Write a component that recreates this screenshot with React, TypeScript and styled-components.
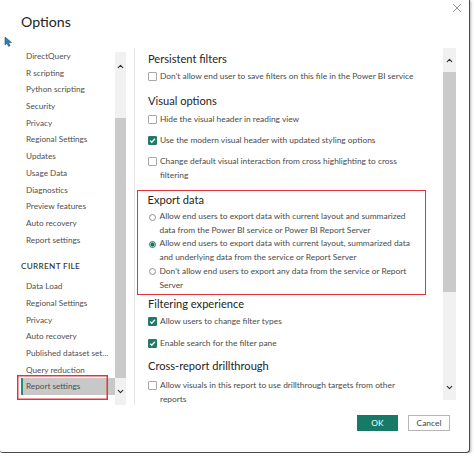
import React from 'react';
import styled, { createGlobalStyle } from 'styled-components';
import { ChevronUp, ChevronDown } from 'lucide-react';

const GlobalStyle = createGlobalStyle`
  html, body { margin: 0; padding: 0; background: #fff; }
  body { font-family: 'Segoe UI', Lato, 'Open Sans', sans-serif; }
`;

const Window = styled.div`
  position: relative;
  box-sizing: border-box;
  width: 470px;
  height: 453px;
  background: #fff;
  border-right: 1.5px solid #4a4a4a;
  border-bottom: 1.5px solid #4a4a4a;
  border-bottom-right-radius: 4px;
  border-bottom-left-radius: 3px;
  box-shadow: 1px 1px 3px rgba(0, 0, 0, 0.3);
  display: flex;
  flex-direction: column;
`;

const TitleBar = styled.div`
  height: 48px;
  display: flex;
  justify-content: space-between;
  align-items: flex-start;
`;

const Title = styled.h1`
  margin: 12px 0 0 21px;
  font-size: 14.2px;
  line-height: 20px;
  font-weight: 400;
  color: #252423;
`;

const Close = styled.span`
  margin: 3px 7px 0 0;
  display: flex;
`;

const Cursor = styled.svg`
  position: absolute;
  left: 4px;
  top: 36px;
`;

const Body = styled.div`
  display: flex;
  height: 357px;
`;

const Nav = styled.nav`
  width: 115px;
  display: flex;
  flex-direction: column;
  font-size: 8.2px;
  color: #505050;
`;

const NavItem = styled.div<{ $active?: boolean }>`
  position: relative;
  height: 16.7px;
  line-height: 16.7px;
  margin-left: 21px;
  padding-left: 3px;
  white-space: nowrap;
  background: ${p => (p.$active ? '#c8c8c8' : 'transparent')};
  border-left: 2px solid ${p => (p.$active ? '#2b8a7a' : 'transparent')};

  ${p =>
    p.$active &&
    `
    &::after {
      content: '';
      position: absolute;
      left: -6px;
      right: 7px;
      top: -3.5px;
      bottom: -4.5px;
      box-shadow: 0 0 0 1.5px rgb(227, 52, 61) inset;
    }
  `}
`;

const NavHeader = styled.div`
  height: 16.7px;
  line-height: 16.7px;
  margin: 10px 0 3.3px 21px;
  font-weight: 600;
  letter-spacing: 0.3px;
  color: #3a3a3a;
`;

const Track = styled.div<{ $w: number; $top: number; $h: number }>`
  flex: none;
  width: ${p => p.$w}px;
  height: ${p => p.$h}px;
  margin-top: ${p => p.$top}px;
  background: #f1f1f1;
  display: flex;
  flex-direction: column;
  align-items: center;
  color: #333;
`;

const Arrow = styled.div<{ $h: number }>`
  height: ${p => p.$h}px;
  display: flex;
  align-items: center;
  justify-content: center;
`;

const Thumb = styled.div<{ $gap: number; $h: number }>`
  align-self: stretch;
  margin-top: ${p => p.$gap}px;
  height: ${p => p.$h}px;
  background: #cacaca;
`;

const Spacer = styled.div`
  flex: 1;
`;

const Divider = styled.div`
  width: 1px;
  margin-left: 8px;
  background: #e6e6e6;
`;

const Content = styled.div`
  width: 308px;
  box-sizing: border-box;
  padding: 2px 0 0 13px;
  display: flex;
  flex-direction: column;
`;

const Heading = styled.h2<{ $gap?: number }>`
  margin: ${p => p.$gap ?? 0}px 0 1px 0;
  height: 18px;
  line-height: 18px;
  font-size: 11.1px;
  font-weight: 400;
  color: #252423;
  white-space: nowrap;
`;

const Row = styled.label<{ $gap?: number }>`
  display: flex;
  align-items: flex-start;
  gap: 3px;
  margin-top: ${p => p.$gap ?? 0}px;
  font-size: 8.4px;
  line-height: 14px;
  color: #4a4a4a;
  white-space: nowrap;
`;

const Box = styled.span<{ $checked?: boolean }>`
  flex: none;
  box-sizing: border-box;
  width: 9px;
  height: 9px;
  margin-top: 2.5px;
  border: 1px solid ${p => (p.$checked ? '#1f7a67' : '#a8a8a8')};
  background: ${p => (p.$checked ? '#1f7a67' : '#fff')};
  border-radius: 1px;
  display: flex;
  align-items: center;
  justify-content: center;
`;

const Radio = styled.span<{ $checked?: boolean }>`
  flex: none;
  box-sizing: border-box;
  width: 7px;
  height: 7px;
  margin: 3.5px 1px 0 1px;
  border-radius: 50%;
  border: 1px solid ${p => (p.$checked ? '#1f7a67' : '#8f8f8f')};
  background: ${p => (p.$checked ? 'radial-gradient(circle, #1f6f5f 0 1.8px, #cfe6df 2.2px)' : '#fff')};
`;

const ExportBox = styled.section`
  box-sizing: border-box;
  width: 289px;
  margin: 8px 0 0 -11px;
  padding: 0 0 2px 9.5px;
  border: 1.5px solid #e3343d;

  label {
    line-height: 13.7px;
  }
`;

const Footer = styled.div`
  display: flex;
  justify-content: flex-end;
  gap: 10px;
  padding: 10px 19px 0 0;
`;

const Button = styled.button<{ $primary?: boolean }>`
  box-sizing: border-box;
  width: ${p => (p.$primary ? 41 : 42)}px;
  height: 16px;
  padding: 0;
  font-family: inherit;
  font-size: 8.4px;
  border: 1px solid ${p => (p.$primary ? '#167a66' : '#b5b5b5')};
  background: ${p => (p.$primary ? '#167a66' : '#fff')};
  color: ${p => (p.$primary ? '#fff' : '#444')};
`;

const Check = () => (
  <svg width="7" height="7" viewBox="0 0 8 8">
    <path d="M1.3 4.2 3.2 6 6.8 2" fill="none" stroke="#fff" strokeWidth="1.4" />
  </svg>
);

const CheckRow = ({ checked, gap, children }: { checked?: boolean; gap?: number; children: React.ReactNode }) => (
  <Row $gap={gap}>
    <Box $checked={checked}>{checked && <Check />}</Box>
    <span>{children}</span>
  </Row>
);

const RadioRow = ({ checked, children }: { checked?: boolean; children: React.ReactNode }) => (
  <Row>
    <Radio $checked={checked} />
    <span>{children}</span>
  </Row>
);

const globalItems = [
  'DirectQuery', 'R scripting', 'Python scripting', 'Security', 'Privacy', 'Regional Settings',
  'Updates', 'Usage Data', 'Diagnostics', 'Preview features', 'Auto recovery', 'Report settings',
];

const fileItems = [
  'Data Load', 'Regional Settings', 'Privacy', 'Auto recovery', 'Published dataset set...', 'Query reduction',
];

export default function App() {
  return (
    <>
      <GlobalStyle />
      <Window>
        <TitleBar>
          <Title>Options</Title>
          <Close>
            <svg width="10" height="10" viewBox="0 0 10 10">
              <path d="M1 1 9 9M9 1 1 9" stroke="#8a8a8a" strokeWidth="0.9" />
            </svg>
          </Close>
        </TitleBar>
        <Cursor width="9" height="11" viewBox="0 0 9 11">
          <path d="M1 1 1 9 3 7.2 4.6 10.4 6 9.8 4.5 6.6 7.6 6.6Z" fill="#2b7fb8" stroke="#1d4f75" strokeWidth="0.6" />
        </Cursor>
        <Body>
          <Nav>
            {globalItems.map(item => (
              <NavItem key={item}>{item}</NavItem>
            ))}
            <NavHeader>CURRENT FILE</NavHeader>
            {fileItems.map(item => (
              <NavItem key={item}>{item}</NavItem>
            ))}
            <NavItem $active>Report settings</NavItem>
          </Nav>
          <Track $w={11} $top={4} $h={353}>
            <Arrow $h={28}><ChevronUp size={9} strokeWidth={3} /></Arrow>
            <Thumb $gap={38} $h={260} />
            <Spacer />
            <Arrow $h={27}><ChevronDown size={9} strokeWidth={3} /></Arrow>
          </Track>
          <Divider />
          <Content>
            <Heading>Persistent filters</Heading>
            <CheckRow>Don't allow end user to save filters on this file in the Power BI service</CheckRow>
            <Heading $gap={9}>Visual options</Heading>
            <CheckRow gap={1}>Hide the visual header in reading view</CheckRow>
            <CheckRow checked gap={7}>Use the modern visual header with updated styling options</CheckRow>
            <CheckRow gap={7}>
              Change default visual interaction from cross highlighting to cross
              <br />
              filtering
            </CheckRow>
            <ExportBox>
              <Heading>Export data</Heading>
              <RadioRow>
                Allow end users to export data with current layout and summarized
                <br />
                data from the Power BI service or Power BI Report Server
              </RadioRow>
              <RadioRow checked>
                Allow end users to export data with current layout, summarized data
                <br />
                and underlying data from the service or Report Server
              </RadioRow>
              <RadioRow>
                Don't allow end users to export any data from the service or Report
                <br />
                Server
              </RadioRow>
            </ExportBox>
            <Heading>Filtering experience</Heading>
            <CheckRow checked>Allow users to change filter types</CheckRow>
            <CheckRow checked gap={8}>Enable search for the filter pane</CheckRow>
            <Heading $gap={7}>Cross-report drillthrough</Heading>
            <CheckRow gap={2}>
              Allow visuals in this report to use drillthrough targets from other
              <br />
              reports
            </CheckRow>
          </Content>
          <Track $w={13} $top={0} $h={352}>
            <Arrow $h={24}><ChevronUp size={9} strokeWidth={3} /></Arrow>
            <Thumb $gap={0} $h={220} />
            <Spacer />
            <Arrow $h={26}><ChevronDown size={9} strokeWidth={3} /></Arrow>
          </Track>
        </Body>
        <Footer>
          <Button $primary>OK</Button>
          <Button>Cancel</Button>
        </Footer>
      </Window>
    </>
  );
}
